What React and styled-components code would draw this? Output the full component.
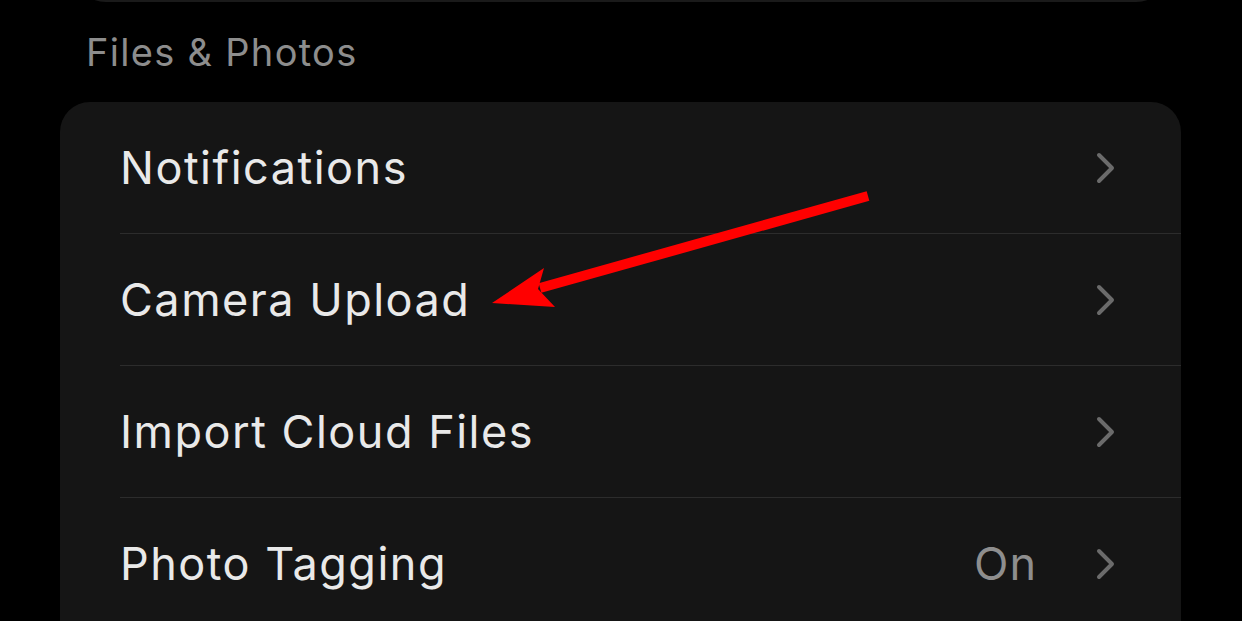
import React from "react";
import styled, { createGlobalStyle } from "styled-components";

const Global = createGlobalStyle`
  html, body {
    margin: 0;
    background: #000;
  }
  body {
    font-family: Inter, "Noto Sans", sans-serif;
    -webkit-font-smoothing: antialiased;
  }
`;

const Screen = styled.div`
  width: 1242px;
  height: 621px;
  overflow: hidden;
  background: #000;
  position: relative;
`;

const PrevCard = styled.div`
  margin: -40px 72px 0 72px;
  height: 42px;
  background: #1a1a1a;
  border-radius: 0 0 34px 34px;
`;

const SectionTitle = styled.div`
  padding: 27px 0 0 86px;
  height: 73px;
  font-size: 38px;
  color: #8d8d8d;
  letter-spacing: 1.3px;
`;

const Card = styled.div`
  margin: 0 61px 0 60px;
  background: #151515;
  border-radius: 30px 30px 0 0;
  padding-left: 60px;
`;

const Row = styled.div`
  display: flex;
  align-items: center;
  height: 131px;
  border-bottom: ${(p) => (p.last ? "none" : "1px solid #2c2c2c")};
`;

const Label = styled.div`
  flex: 1;
  font-size: 45px;
  color: #e9e9e9;
  letter-spacing: 1.5px;
`;

const Value = styled.div`
  font-size: 45px;
  color: #8e8e8e;
  letter-spacing: 1px;
  margin-right: 58px;
`;

const Chevron = styled.svg`
  width: 22px;
  height: 34px;
  margin-right: 64px;
  flex-shrink: 0;
`;

const Arrow = styled.svg`
  position: absolute;
  left: 0;
  top: 0;
  pointer-events: none;
`;

const rows = [
  { label: "Notifications" },
  { label: "Camera Upload" },
  { label: "Import Cloud Files" },
  { label: "Photo Tagging", value: "On" },
];

export default function App() {
  return (
    <Screen>
      <Global />
      <PrevCard />
      <SectionTitle>Files &amp; Photos</SectionTitle>
      <Card>
        {rows.map((r, i) => (
          <Row key={r.label} last={i === rows.length - 1}>
            <Label>{r.label}</Label>
            {r.value && <Value>{r.value}</Value>}
            <Chevron viewBox="0 0 22 34">
              <path
                d="M4 4 L17 17 L4 30"
                fill="none"
                stroke="#6b6b6b"
                strokeWidth="4"
                strokeLinecap="round"
                strokeLinejoin="round"
              />
            </Chevron>
          </Row>
        ))}
      </Card>
      <Arrow width="1242" height="621" viewBox="0 0 1242 621">
        <line x1="868" y1="196" x2="540" y2="288" stroke="#ff0000" strokeWidth="10" />
        <polygon points="492,303 544,268 538,289 555,307" fill="#ff0000" />
      </Arrow>
    </Screen>
  );
}
